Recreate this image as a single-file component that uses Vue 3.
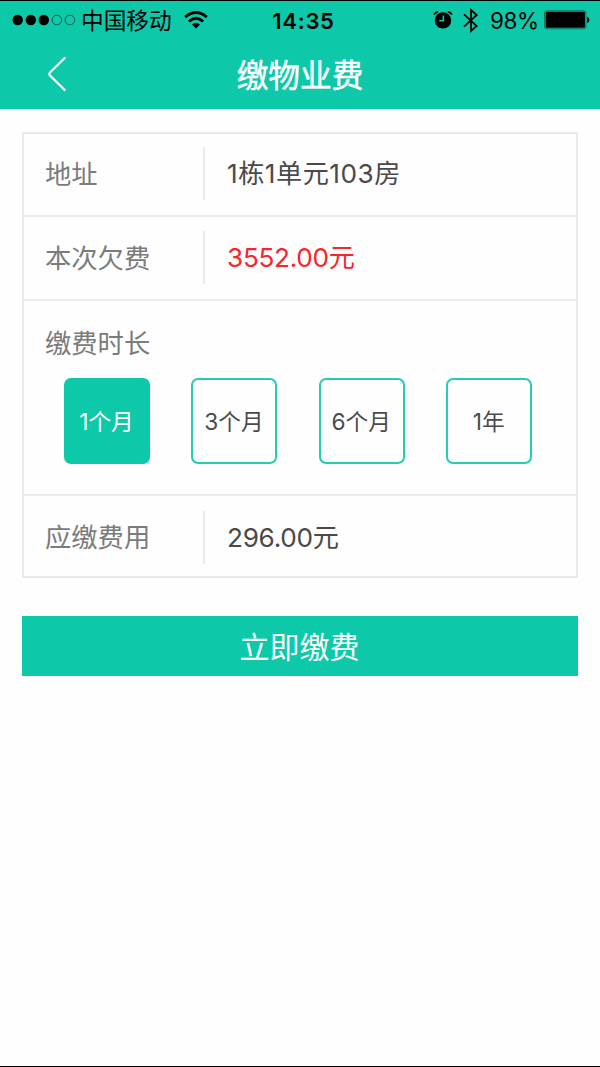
<script setup>
import { ref } from 'vue'

const durations = ['1个月', '3个月', '6个月', '1年']
const selected = ref(0)
</script>

<template>
  <div class="screen">
    <header class="top">
      <div class="status">
        <div class="left">
          <svg class="signal" width="64" height="12" viewBox="0 0 64 12">
            <circle cx="5.7" cy="6" r="5.2" />
            <circle cx="18.8" cy="6" r="5.2" />
            <circle cx="31.8" cy="6" r="5.2" />
            <circle class="hollow" cx="44.9" cy="6" r="4.8" />
            <circle class="hollow" cx="57.9" cy="6" r="4.8" />
          </svg>
          <span class="carrier">中国移动</span>
          <svg class="wifi" width="24" height="18" viewBox="0 0 24 18">
            <g fill="none" stroke="#000" stroke-width="2.9">
              <path d="M1.2 6.2 Q12 -3 22.8 6.2" />
              <path d="M4.9 10.5 Q12 4.1 19.1 10.5" />
            </g>
            <path d="M8 13.5 Q12 10 16 13.5 L12 17.5 Z" />
          </svg>
        </div>
        <span class="time">14:35</span>
        <div class="right">
          <svg class="alarm" width="20" height="18" viewBox="0 0 20 18">
            <circle cx="10" cy="9.4" r="8.2" />
            <path d="M1.1 3.7 Q2.2 1.1 5.2 .8 M14.8 .8 Q17.8 1.1 18.9 3.7" fill="none" stroke="#000" stroke-width="1.7" />
            <path d="M10.4 4.6 V9.8 H6.2" fill="none" stroke="#0dc9aa" stroke-width="1.6" />
          </svg>
          <svg class="bluetooth" width="16" height="25" viewBox="0 0 16 25">
            <path d="M1 6.3 L13.7 18 L8 23 V2 L13.7 7 L1 18.7" fill="none" stroke="#000" stroke-width="1.8" />
          </svg>
          <span class="percent">98%</span>
          <svg class="battery" width="46" height="20" viewBox="0 0 46 20">
            <rect x=".7" y=".8" width="41.2" height="18" rx="2.5" fill="none" stroke="#087765" stroke-width="1.1" />
            <rect x="1.7" y="1.8" width="39.2" height="16" rx="1.3" />
            <path d="M43.2 6.8 C46 7.5 46 12.2 43.2 12.9 Z" />
          </svg>
        </div>
      </div>
      <div class="nav">
        <svg class="back" width="20" height="36" viewBox="0 0 20 36">
          <path d="M17.7 2 L3 16.5 Q1.6 18 3 19.5 L17.7 34" fill="none" stroke="#fff" stroke-width="2.2" stroke-linecap="round" />
        </svg>
        <h1>缴物业费</h1>
      </div>
    </header>
    <main>
      <section class="card">
        <div class="row first">
          <span class="label">地址</span>
          <span class="value address">1栋1单元103房</span>
        </div>
        <div class="row second">
          <span class="label">本次欠费</span>
          <span class="value due">3552.00元</span>
        </div>
        <div class="period">
          <div class="label">缴费时长</div>
          <div class="options">
            <button
              v-for="(d, i) in durations"
              :key="d"
              :class="{ active: i === selected }"
              @click="selected = i"
            >{{ d }}</button>
          </div>
        </div>
        <div class="row last">
          <span class="label">应缴费用</span>
          <span class="value">296.00元</span>
        </div>
      </section>
      <button class="pay">立即缴费</button>
    </main>
  </div>
</template>

<style>
body {
  background: #fefefe;
}
</style>

<style scoped>
.screen {
  box-sizing: border-box;
  width: 600px;
  height: 1067px;
  border-top: 1px solid #000;
  border-bottom: 1px solid #000;
  background: #fefefe;
  color: #4a4a4a;
  font-family: Inter, "Noto Sans CJK SC", sans-serif;
  font-weight: 390;
  overflow: hidden;
}
button {
  margin: 0;
  padding: 0;
  font: inherit;
}
svg {
  display: block;
  flex: none;
}
.top {
  height: 107.5px;
  background: #0dc9aa;
}
.status {
  display: grid;
  grid-template-columns: 1fr auto 1fr;
  grid-template-rows: 38px;
  align-items: center;
  height: 38px;
  padding: 0 10px 0 12px;
  color: #000;
}
.left,
.right {
  display: flex;
  align-items: center;
  height: 38px;
}
.right {
  justify-content: flex-end;
}
.hollow {
  fill: none;
  stroke: #064f43;
  stroke-width: 0.9;
}
.carrier {
  margin-left: 5px;
  padding-top: 2px;
  font-size: 22.7px;
  line-height: 36px;
}
.wifi {
  margin-left: 12px;
}
.time {
  padding: 2px 0 0 5px;
  font-size: 22px;
  font-weight: 600;
  letter-spacing: 0.7px;
  line-height: 36px;
}
.bluetooth {
  margin-left: 10px;
}
.percent {
  margin: 2px 5px 0 11px;
  font-size: 22.5px;
  letter-spacing: -0.5px;
  line-height: 36px;
}
.battery {
  margin-right: 0.5px;
}
.nav {
  display: grid;
  grid-template-columns: 48px 1fr 48px;
  align-items: center;
  height: 70px;
}
.back {
  justify-self: end;
  margin-right: -19px;
}
h1 {
  margin: 0;
  padding-top: 3px;
  color: #fff;
  font-size: 31.7px;
  font-weight: 400;
  line-height: 60px;
  text-align: center;
  -webkit-text-stroke: 0.5px #fff;
}
main {
  padding: 23.5px 22px 0;
}
.card {
  box-sizing: border-box;
  height: 446px;
  border: 2px solid #e9e9e9;
}
.row {
  box-sizing: border-box;
  display: flex;
  align-items: center;
  height: 83px;
  padding-left: 21px;
  border-bottom: 2px solid #ebebeb;
}
.first {
  padding-bottom: 2px;
}
.second {
  height: 84px;
  padding-bottom: 1px;
}
.last {
  height: 80px;
  padding-top: 2px;
  border-bottom: 0;
}
.label {
  width: 158px;
  padding-top: 2px;
  color: #7b7b7b;
  font-size: 26.3px;
  line-height: 40px;
}
.value {
  padding-left: 22px;
  border-left: 2px solid #ebebeb;
  font-size: 26.2px;
  letter-spacing: -0.3px;
  line-height: 53px;
}
.address {
  letter-spacing: 0.5px;
}
.due {
  color: #f6262d;
}
.period {
  box-sizing: border-box;
  height: 195px;
  padding: 21px 21px 0;
  border-bottom: 2px solid #ebebeb;
}
.options {
  display: flex;
  gap: 41.4px;
  margin: 14px 0 0 19px;
}
.options button {
  box-sizing: border-box;
  flex: none;
  width: 86px;
  height: 86px;
  padding: 0 1px 2px 0;
  border: 2px solid #25cdb1;
  border-radius: 7px;
  background: #fefefe;
  color: #4a4a4a;
  font-size: 22.7px;
}
.options .active {
  border-color: #0dc9aa;
  background: #0dc9aa;
  color: #fff;
}
.pay {
  display: block;
  width: 556px;
  height: 60px;
  margin-top: 38px;
  padding: 0 1px 3px 0;
  border: 0;
  background: #0dc9aa;
  color: #fff;
  font-size: 30px;
}
</style>
